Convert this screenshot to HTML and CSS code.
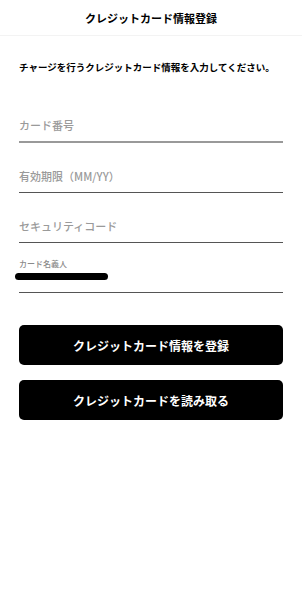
FILE: index.html
```html
<!DOCTYPE html>
<html>
    <head>
        <title>クレジットカード情報登録</title>
        <meta charset="UTF-8">
        <meta name="viewport" content="width=device-width, initial-scale=1.0">
        <link rel="stylesheet" href="styles.css">
    </head>
    <body>
        <div class="header">クレジットカード情報登録</div>
        <div class="content">
            <p class="intro">チャージを行うクレジットカード情報を入力してください。</p>

            <div class="field field-active">
                <span class="placeholder">カード番号</span>
            </div>
            <div class="field">
                <span class="placeholder">有効期限（MM/YY）</span>
            </div>
            <div class="field">
                <span class="placeholder">セキュリティコード</span>
            </div>
            <div class="field field-filled">
                <span class="smallLabel">カード名義人</span>
                <span class="redacted"></span>
            </div>

            <div class="buttons">
                <button class="btn">クレジットカード情報を登録</button>
                <button class="btn">クレジットカードを読み取る</button>
            </div>
        </div>
    </body>
</html>
```

FILE: styles.css
```css
body {
    margin: 0;
    background: #fff;
    font-family: "Noto Sans CJK JP", "Noto Sans", sans-serif;
    color: #000;
}

.header {
    height: 35px;
    border-bottom: 1px solid #f3f3f3;
    display: flex;
    align-items: center;
    justify-content: center;
    font-size: 11px;
    font-weight: bold;
}

.content {
    padding: 0 19px;
}

.intro {
    margin: 23px 0 0 0;
    font-size: 9.5px;
    font-weight: bold;
    line-height: 16px;
}

.field {
    height: 50px;
    border-bottom: 1px solid #555;
    display: flex;
    flex-direction: column;
    justify-content: flex-end;
    padding-bottom: 8px;
    box-sizing: border-box;
}

.intro + .field {
    margin-top: 17px;
}

.field-active {
    border-bottom: 2px solid #999;
    height: 51px;
}

.placeholder {
    font-size: 11px;
    font-weight: 500;
    color: #9a9a9a;
    line-height: 16px;
}

.field-filled {
    justify-content: flex-start;
    padding-top: 15px;
}

.smallLabel {
    font-size: 8px;
    font-weight: 500;
    color: #8a8a8a;
    line-height: 11px;
}

.redacted {
    display: block;
    width: 93px;
    height: 7px;
    margin: 4px 0 0 -4px;
    background: #000;
    border-radius: 4px;
}

.buttons {
    margin-top: 32px;
    display: flex;
    flex-direction: column;
    gap: 15px;
}

.btn {
    height: 40px;
    border: none;
    border-radius: 5px;
    background: #000;
    color: #fff;
    font-family: inherit;
    font-size: 12px;
    font-weight: bold;
}
```
